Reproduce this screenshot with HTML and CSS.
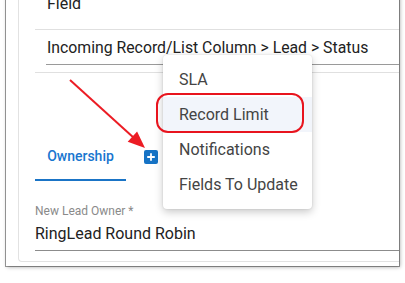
FILE: index.html
```html
<!DOCTYPE html>
<html>
<head>
<meta charset="utf-8">
<link rel="stylesheet" href="styles.css">
</head>
<body>
<div class="frame">
  <div class="panel">
    <div class="row-top"><span class="field-name">Field</span></div>
    <div class="row-input">
      <div class="input">Incoming Record/List Column &gt; Lead &gt; Status</div>
    </div>
    <div class="tabs">
      <div class="tab">Ownership</div>
      <svg class="plus" width="14" height="14" viewBox="0 0 14 14"><rect x="0" y="0" width="14" height="14" rx="2" fill="#1673c5"/><path d="M7 3.2V10.8M3.2 7H10.8" stroke="#fff" stroke-width="1.8"/></svg>
    </div>
    <div class="owner">
      <div class="owner-label">New Lead Owner *</div>
      <div class="owner-value">RingLead Round Robin</div>
    </div>
  </div>
</div>
<div class="menu">
  <div class="menu-item">SLA</div>
  <div class="menu-item active">Record Limit</div>
  <div class="menu-item">Notifications</div>
  <div class="menu-item">Fields To Update</div>
</div>
<div class="highlight"></div>
<svg class="arrow" width="405" height="283" viewBox="0 0 405 283">
  <line x1="70" y1="80" x2="134" y2="138" stroke="#ec1c24" stroke-width="2"/>
  <polygon points="145,148 127.7,141.8 137.1,131.4" fill="#ec1c24"/>
</svg>
</body>
</html>
```
FILE: styles.css
```css
html, body {
  margin: 0;
  padding: 0;
}
body {
  position: relative;
  width: 405px;
  height: 283px;
  overflow: hidden;
  background: #fff;
  font-family: Roboto, "Liberation Sans", sans-serif;
}
.frame {
  margin: 5px 0 0 6px;
  width: 393px;
  height: 272px;
  background: #fff;
  box-shadow: 0 0 0 1px rgba(0,0,0,0.38), 1px 1px 4px rgba(0,0,0,0.35);
}
.panel {
  margin-left: 12px;
  height: 268px;
  box-sizing: border-box;
  border-left: 1px solid #e2e2e2;
  border-bottom: 1px solid #e2e2e2;
  border-bottom-left-radius: 4px;
  padding-left: 16px;
}
.row-top {
  margin-top: -11px;
  height: 35px;
  padding-left: 12px;
  border-bottom: 1px solid #e0e0e0;
  font-size: 16px;
  line-height: 20px;
  color: #222;
}
.row-input {
  padding: 7px 0 7px 11px;
  border-bottom: 1px solid #e0e0e0;
}
.input {
  font-size: 15.8px;
  line-height: 22px;
  padding: 0 0 5px 1px;
  color: #222;
  border-bottom: 1px solid #9a9a9a;
  white-space: nowrap;
}
.tabs {
  margin-top: 60px;
  display: flex;
  align-items: center;
  gap: 18px;
}
.tab {
  width: 91px;
  box-sizing: border-box;
  text-align: center;
  padding: 13px 0;
  font-size: 14px;
  line-height: 20px;
  font-weight: 500;
  color: #1976cf;
  border-bottom: 2px solid #1a74c6;
}
.plus {
  display: block;
}
.owner {
  margin-top: 22px;
}
.owner-label {
  font-size: 12px;
  line-height: 16px;
  color: #8a8a8a;
}
.owner-value {
  margin-top: 3px;
  font-size: 16px;
  line-height: 24px;
  padding-bottom: 4px;
  color: #222;
  border-bottom: 1px solid #8c8c8c;
}
.menu {
  position: absolute;
  left: 163px;
  top: 55px;
  width: 149px;
  padding: 7px 0;
  background: #fff;
  border-radius: 4px;
  box-shadow: 0 3px 8px rgba(0,0,0,0.22), 0 0 2px rgba(0,0,0,0.12);
}
.menu-item {
  height: 35px;
  line-height: 35px;
  padding-left: 16px;
  font-size: 16px;
  color: #444;
  white-space: nowrap;
}
.menu-item.active {
  background: #f2f5fb;
}
.highlight {
  position: absolute;
  left: 156px;
  top: 93px;
  width: 148px;
  height: 40px;
  box-sizing: border-box;
  border: 2px solid #e8141e;
  border-radius: 12px;
}
.arrow {
  position: absolute;
  left: 0;
  top: 0;
  pointer-events: none;
}
```
